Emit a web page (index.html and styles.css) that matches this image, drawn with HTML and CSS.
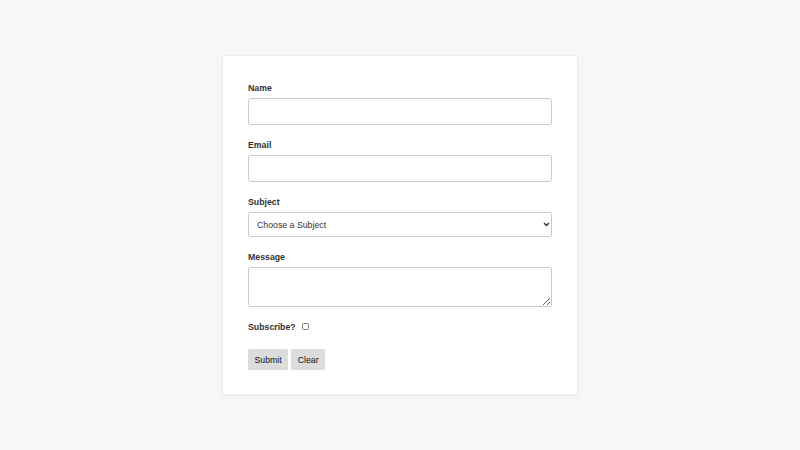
FILE: index.html
```html
<!DOCTYPE html>
<html lang="en">
<head>
<meta charset="utf-8">
<title>Contact form</title>
<link rel="stylesheet" href="styles.css">
</head>
<body>
<main class="page">
  <form class="card">
    <div class="field">
      <label class="label" for="name">Name</label>
      <input class="input" id="name" type="text">
    </div>
    <div class="field">
      <label class="label" for="email">Email</label>
      <input class="input" id="email" type="email">
    </div>
    <div class="field">
      <label class="label" for="subject">Subject</label>
      <div class="select-wrap">
        <select class="select" id="subject">
          <option>Choose a Subject</option>
        </select>
        <svg class="chevron" width="7" height="5" viewBox="0 0 7 5"><path d="M1 1 L3.5 3.5 L6 1" fill="none" stroke="#333" stroke-width="1.4"/></svg>
      </div>
    </div>
    <div class="field">
      <label class="label" for="message">Message</label>
      <textarea class="textarea" id="message"></textarea>
    </div>
    <div class="check-row">
      <label class="label" for="sub">Subscribe?</label>
      <input class="check" id="sub" type="checkbox">
    </div>
    <div class="actions">
      <button class="btn" type="button">Submit</button>
      <button class="btn" type="button">Clear</button>
    </div>
  </form>
</main>
</body>
</html>
```
FILE: styles.css
```css
* { box-sizing: border-box; }
html, body { margin: 0; padding: 0; }
body {
  background: #f7f7f7;
  font-family: "Liberation Sans", Arial, sans-serif;
  font-size: 8.75px;
  color: #333;
}
.page {
  min-height: 100vh;
  display: flex;
  align-items: center;
  justify-content: center;
}
.card {
  width: 356px;
  background: #fff;
  border: 1px solid #eeeeee;
  border-radius: 2px;
  box-shadow: 0 1px 2px rgba(0,0,0,0.06);
  padding: 27px 25px 24px;
  display: flex;
  flex-direction: column;
}
.field {
  display: flex;
  flex-direction: column;
  gap: 5px;
  margin-bottom: 15px;
}
.label {
  font-weight: bold;
  line-height: 10px;
  color: #333;
}
.input, .select, .textarea {
  display: block;
  width: 100%;
  margin: 0;
  border: 1px solid #c9c9c9;
  border-radius: 2.5px;
  background: #fff;
  font-family: inherit;
  font-size: 8.75px;
  color: #333;
  outline: none;
}
.input { height: 27px; padding: 0 8px; }
.select-wrap { position: relative; }
.select {
  height: 25px;
  padding: 0 8px;
  appearance: none;
  -webkit-appearance: none;
}
.chevron {
  position: absolute;
  right: 2px;
  top: 10px;
  pointer-events: none;
}
.textarea {
  height: 40px;
  padding: 4px 8px;
  resize: vertical;
}
.check-row {
  display: flex;
  align-items: center;
  gap: 6px;
  height: 10px;
}
.check {
  appearance: none;
  -webkit-appearance: none;
  width: 7px;
  height: 7px;
  margin: 0;
  border: 1px solid #767676;
  border-radius: 1.5px;
  background: #fff;
  position: relative;
  top: -1px;
}
.actions {
  display: flex;
  gap: 3px;
  margin-top: 17px;
}
.btn {
  height: 21px;
  padding: 0 6.5px;
  border: none;
  border-radius: 1px;
  background: #dcdcdc;
  font-family: inherit;
  font-size: 8.75px;
  color: #111;
}
```
